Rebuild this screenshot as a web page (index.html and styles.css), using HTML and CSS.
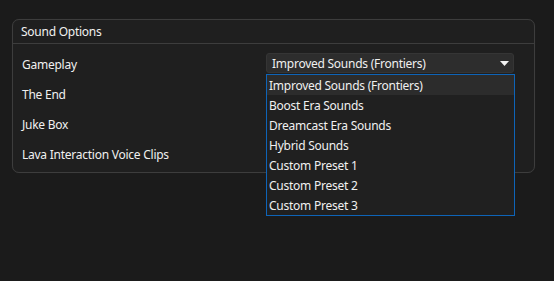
FILE: index.html
```html
<html>
<head>
  <title>Sound Options</title>
  <meta http-equiv="Content-Type" content="text/html; charset=utf-8">
  <link rel="stylesheet" href="styles.css">
</head>
<body>
  <div class="panel">
    <div class="panel-title">Sound Options</div>
    <div class="panel-body">
      <div class="row">
        <span class="label">Gameplay</span>
        <div class="combo">
          <div class="combo-box">
            <span>Improved Sounds (Frontiers)</span>
            <svg class="arrow" width="9" height="5" viewBox="0 0 9 5"><path d="M0 0H9L4.5 5Z" fill="#f2f2f2"/></svg>
          </div>
          <ul class="combo-list">
            <li class="selected">Improved Sounds (Frontiers)</li>
            <li>Boost Era Sounds</li>
            <li>Dreamcast Era Sounds</li>
            <li>Hybrid Sounds</li>
            <li>Custom Preset 1</li>
            <li>Custom Preset 2</li>
            <li>Custom Preset 3</li>
          </ul>
        </div>
      </div>
      <div class="row"><span class="label">The End</span></div>
      <div class="row"><span class="label">Juke Box</span></div>
      <div class="row"><span class="label">Lava Interaction Voice Clips</span></div>
    </div>
  </div>
</body>
</html>
```
FILE: styles.css
```css
html {
  box-sizing: border-box;
}
*, *:before, *:after {
  box-sizing: inherit;
}
body {
  margin: 0;
  padding: 19px 19px 0 12px;
  background: #1b1b1b;
  color: #f0f0f0;
  font-family: "Noto Sans", "Open Sans", sans-serif;
  font-size: 12px;
  letter-spacing: -0.25px;
}
.panel {
  width: 523px;
  height: 154px;
  border: 1px solid #3d3d3d;
  border-radius: 7px;
  background: #1f1f1f;
  box-shadow: 0 0 1px #2a2a2a;
}
.panel-title {
  height: 24px;
  line-height: 23px;
  padding-left: 8px;
  border-bottom: 1px solid #3d3d3d;
}
.panel-body {
  padding: 5px 20px 0 9px;
}
.row {
  display: flex;
  align-items: center;
  justify-content: space-between;
  height: 30px;
}
.combo {
  position: relative;
  width: 248px;
  margin-top: -2px;
}
.combo-box {
  display: flex;
  align-items: center;
  justify-content: space-between;
  height: 20px;
  padding: 0 4px 0 5px;
  background: #2d2d2d;
  border: 1px solid #353535;
  border-radius: 3px;
}
.arrow {
  display: block;
}
.combo-list {
  position: absolute;
  top: 21px;
  left: 0;
  width: 249px;
  margin: 0;
  padding: 0;
  list-style: none;
  background: #202020;
  border: 1px solid #0e64b8;
  z-index: 2;
}
.combo-list li {
  height: 20px;
  line-height: 21px;
  padding-left: 2px;
}
.combo-list li.selected {
  background: #2c2c2c;
}
```
